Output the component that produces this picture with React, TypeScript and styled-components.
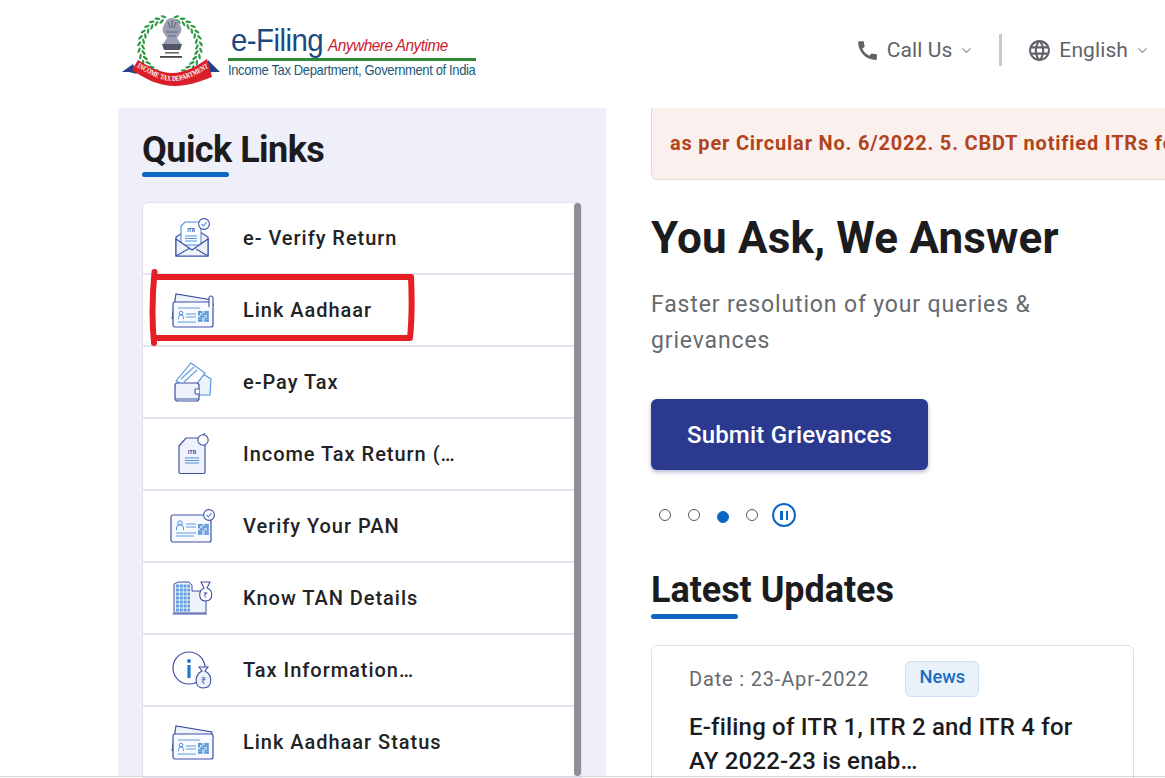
import React from 'react'
import styled, { createGlobalStyle } from 'styled-components'
import { MdCall, MdLanguage } from 'react-icons/md'
import { ChevronDown } from 'lucide-react'

const GlobalStyle = createGlobalStyle`
  html, body {
    margin: 0;
    padding: 0;
    height: 778px;
    overflow: hidden;
    background: #fff;
    font-family: Roboto, "Liberation Sans", sans-serif;
  }
`

const Page = styled.div`
  position: relative;
  width: 1165px;
  height: 778px;
  overflow: hidden;
  background: #fff;
`

const Header = styled.header`
  display: flex;
  align-items: center;
  justify-content: space-between;
  height: 108px;
  padding: 0 15px 8px 121px;
  box-sizing: border-box;
`

const Logo = styled.div`
  display: flex;
  align-items: center;
  gap: 7px;
`

const LogoText = styled.div`
  display: flex;
  flex-direction: column;
  width: 248px;
  margin-top: 6px;
`

const LogoTop = styled.div`
  display: flex;
  align-items: baseline;
  padding-left: 3px;
  height: 30px;
  line-height: 24px;
  white-space: nowrap;
`

const LogoName = styled.span`
  display: inline-block;
  width: 97px;
  transform: scaleX(0.92);
  transform-origin: left center;
  font-family: "Liberation Sans", Arial, sans-serif;
  font-size: 32px;
  letter-spacing: -0.6px;
  color: #1c4a80;
`

const LogoSlogan = styled.span`
  display: inline-block;
  transform: scaleX(0.93);
  transform-origin: left center;
  font-family: "Liberation Sans", Arial, sans-serif;
  font-size: 16.5px;
  font-style: italic;
  letter-spacing: -0.5px;
  color: #c8202f;
`

const LogoRule = styled.div`
  height: 3px;
  background: #2f8a3c;
`

const LogoSub = styled.div`
  margin-top: 1px;
  transform: scaleX(0.892);
  transform-origin: left center;
  font-family: "Liberation Sans", Arial, sans-serif;
  font-size: 14.6px;
  line-height: 17px;
  letter-spacing: -0.42px;
  color: #1c5a78;
  white-space: nowrap;
`

const Tools = styled.div`
  display: flex;
  align-items: center;
  color: #5f6368;
  font-size: 21px;
  letter-spacing: 0.1px;
`

const Tool = styled.div`
  display: flex;
  align-items: center;
  gap: 7px;
`

const ToolDivider = styled.div`
  width: 3px;
  height: 32px;
  margin: 0 25px;
  background: #c9c9c9;
`

const Main = styled.main`
  display: flex;
  align-items: flex-start;
  padding-left: 118px;
`

const LeftPanel = styled.aside`
  flex: 0 0 488px;
  height: 668px;
  padding: 24px 24px 0;
  box-sizing: border-box;
  background: #eeeff8;
`

const SectionTitle = styled.h2<{ $spacing: number }>`
  margin: 0;
  font-size: 36px;
  line-height: 36px;
  font-weight: 700;
  letter-spacing: ${p => p.$spacing}px;
  color: #1c1c1e;
`

const TitleBar = styled.div<{ $gap: number }>`
  width: 87px;
  height: 5px;
  margin-top: ${p => p.$gap}px;
  border-radius: 3px;
  background: #0b66c3;
`

const LinkList = styled.div`
  position: relative;
  width: 440px;
  height: 640px;
  margin-top: 25px;
  box-sizing: border-box;
  background: #fff;
  border: 1px solid #dfe0ea;
  border-radius: 6px 6px 0 0;
`

const LinkRow = styled.div`
  display: flex;
  align-items: center;
  height: 72px;
  box-sizing: border-box;
  border-bottom: 2px solid #e2e3ec;
`

const LinkIcon = styled.div`
  flex: 0 0 100px;
  display: flex;
  justify-content: center;
`

const LinkLabel = styled.span`
  font-size: 20px;
  font-weight: 500;
  letter-spacing: 0.97px;
  color: #232326;
  white-space: nowrap;
`

const ScrollThumb = styled.div`
  position: absolute;
  top: 0;
  right: 0;
  width: 7px;
  height: 573px;
  border-radius: 4px;
  background: #8d8d9b;
`

const RedMark = styled.svg`
  position: absolute;
  left: 148px;
  top: 268px;
`

const RightColumn = styled.section`
  flex: 0 0 483px;
  margin-left: 45px;
`

const Ticker = styled.div`
  width: 600px;
  height: 72px;
  box-sizing: border-box;
  padding: 0 0 2px 18px;
  display: flex;
  align-items: center;
  background: #faf1ef;
  border: 1px solid #e6dbd8;
  border-top: none;
  border-radius: 0 0 6px 6px;
  font-size: 20px;
  font-weight: 700;
  letter-spacing: 0.8px;
  color: #b2441c;
  white-space: nowrap;
`

const Hero = styled.h1`
  margin: 32px 0 0;
  font-size: 44px;
  line-height: 52px;
  font-weight: 700;
  letter-spacing: 0.18px;
  color: #1c1c1e;
`

const HeroCopy = styled.p`
  margin: 23px 0 0;
  width: 420px;
  font-size: 23px;
  line-height: 36px;
  letter-spacing: 0.85px;
  color: #666a6e;
`

const PrimaryButton = styled.button`
  display: block;
  width: 277px;
  height: 71px;
  margin-top: 40px;
  border: none;
  border-radius: 6px;
  background: #2b3a8f;
  box-shadow: 0 2px 4px rgba(30, 40, 110, 0.35);
  color: #fff;
  font-family: inherit;
  font-size: 24px;
  font-weight: 500;
  letter-spacing: 0.2px;
`

const Pager = styled.div`
  display: flex;
  align-items: center;
  gap: 17px;
  height: 26px;
  margin-top: 32px;
  padding-left: 8px;
`

const Dot = styled.span<{ $active?: boolean }>`
  width: 12px;
  height: 12px;
  margin-top: ${p => (p.$active ? '4px' : '0')};
  box-sizing: border-box;
  border-radius: 50%;
  border: 1px solid ${p => (p.$active ? '#0b66c3' : '#55585c')};
  background: ${p => (p.$active ? '#0b66c3' : '#fff')};
`

const PauseButton = styled.span`
  display: flex;
  align-items: center;
  justify-content: center;
  gap: 3px;
  width: 24px;
  height: 24px;
  margin-left: -3px;
  box-sizing: border-box;
  border: 2.5px solid #0b66c3;
  border-radius: 50%;

  &::before,
  &::after {
    content: '';
    width: 2.5px;
    height: 9px;
    background: #0b66c3;
  }
`

const UpdatesHead = styled.div`
  margin-top: 44px;
`

const NewsCard = styled.article`
  width: 483px;
  height: 200px;
  margin-top: 26px;
  padding: 15px 37px 0;
  box-sizing: border-box;
  border: 1px solid #dfe1e6;
  border-radius: 6px;
  background: #fff;
`

const NewsMeta = styled.div`
  display: flex;
  align-items: center;
  gap: 36px;
`

const NewsDate = styled.span`
  font-size: 20px;
  letter-spacing: 0.83px;
  color: #666a6e;
`

const NewsTag = styled.span`
  padding: 4px 13px 8px;
  border: 1px solid #cfdfef;
  border-radius: 6px;
  background: #e9f1fb;
  font-size: 18.3px;
  font-weight: 500;
  line-height: 22px;
  color: #1b6dbf;
`

const NewsTitle = styled.p`
  margin: 13px 0 0;
  font-size: 24px;
  line-height: 34px;
  font-weight: 500;
  letter-spacing: 0.18px;
  color: #1c1c1e;
`

const BottomEdge = styled.div`
  position: absolute;
  left: 0;
  right: 0;
  bottom: 1px;
  height: 1px;
  background: #d6d7dc;
`

// leaves of the wreath: two rows along each side, measured in degrees from the top
const leaves = Array.from({ length: 24 }, (_, i) => 12 + i * 6).flatMap(t => {
  const a = (t * Math.PI) / 180
  const row = Math.round(t / 6) % 2 === 0 ? 31 : 27
  const tilt = row === 31 ? 28 : -28
  const x = Math.sin(a) * row
  const y = -Math.cos(a) * row
  return [
    { x: 49 - x, y: 34 + y, r: 90 - t + tilt },
    { x: 49 + x, y: 34 + y, r: -(90 - t + tilt) }
  ]
})

const Emblem = () => (
  <svg width="100" height="74" viewBox="0 0 100 74">
    {leaves.map((l, i) => (
      <ellipse key={i} cx={l.x} cy={l.y} rx="1.2" ry="3" fill="#2f9a45" transform={`rotate(${l.r} ${l.x} ${l.y})`} />
    ))}
    {/* lion capital */}
    <path d="M45 8 C47 4 55 4 57 8 L60 14 C61 17 60 20 58 22 L56 25 L60 31 L42 31 L46 25 L44 22 C42 20 41 17 42 14 Z" fill="#9aa0b2" />
    <path d="M47 9 L49 15 M51 7 V15 M55 9 L53 15 M45 19 H57 M47 23 H55" stroke="#5a6075" strokeWidth="0.9" />
    <path d="M41 31 H61 L59 37 H43 Z" fill="#4f5468" />
    <rect x="44" y="39" width="14" height="1.6" fill="#6a6a6a" />
    <rect x="39" y="43" width="22" height="1.8" fill="#444" />
    {/* ribbon */}
    <path d="M1 59 L12 51 L16 61 L8 59 Z" fill="#27408b" />
    <path d="M99 59 L87 47 L84 60 L92 59 Z" fill="#27408b" />
    <path d="M17 47 C28 54 40 60 51 60 C64 60 76 53 86 46 L91 64 C78 69 66 73 54 73 C38 73 24 66 11 57 Z" fill="#d81f2a" />
    <path id="ribbonPath" d="M14 53 C28 61 40 68 52 68 C65 68 77 61 89 54" fill="none" />
    <text fontFamily="Liberation Serif, serif" fontSize="7.5" fontWeight="700" fill="#fff">
      <textPath href="#ribbonPath" startOffset="2" textLength="78" lengthAdjust="spacingAndGlyphs">INCOME TAX DEPARTMENT</textPath>
    </text>
  </svg>
)

const ink = '#3f51a3'
const sky = '#4a90dc'
const pale = '#eef2fb'

// dense blue block that reads as a qr code at this size
const qrCells = [1, 1, 0, 1, 1, 1, 0, 1, 1, 1, 0, 1, 1, 0, 1, 1, 1, 0, 1, 1, 1, 1, 0, 1, 1]

const QrBlock = ({ x, y, s = 10 }: { x: number; y: number; s?: number }) => (
  <g fill={sky}>
    <rect x={x} y={y} width={s} height={s} opacity="0.3" />
    {qrCells.map((on, i) =>
      on ? (
        <rect key={i} x={x + (i % 5) * (s / 5)} y={y + Math.floor(i / 5) * (s / 5)} width={s / 5 - 0.3} height={s / 5 - 0.3} />
      ) : null
    )}
  </g>
)

const CardFront = ({ y = 14 }: { y?: number }) => (
  <g>
    <rect x="3" y={y} width="40" height="25" rx="2" fill="#f7f9fe" stroke={ink} strokeWidth="1.2" />
    <circle cx="11" cy={y + 11} r="1.8" fill="none" stroke={sky} />
    <path d={`M8.5 ${y + 17} v-1.5 a2.5 2.5 0 0 1 5 0 v1.5`} fill="none" stroke={sky} />
    <path d={`M16 ${y + 12} h10 M16 ${y + 15} h10 M8 ${y + 6} h22 M8 ${y + 20} h18`} stroke={sky} strokeWidth="0.9" />
    <QrBlock x={28} y={y + 9} s={11} />
  </g>
)

const IconVerifyReturn = () => (
  <svg width="42" height="42" viewBox="0 0 42 42">
    <path d="M4 20 L20 10 L36 20 V39 H4 Z" fill={pale} stroke={ink} strokeWidth="1.2" />
    <path d="M9 28 V9 L13 5 H29 V28 Z" fill="#fff" stroke={sky} strokeWidth="1.1" />
    <text x="19" y="15" fontSize="5" fontFamily="Roboto" fontWeight="700" textAnchor="middle" fill={ink}>ITR</text>
    <path d="M13 19 H25 M13 21.5 H25 M13 24 H25" stroke={sky} strokeWidth="1" />
    <path d="M4 22 L20 33 L36 22 V39 H4 Z" fill={pale} stroke={ink} strokeWidth="1.2" />
    <path d="M4 39 L18 31 M36 39 L24 32" stroke={ink} strokeWidth="1.1" />
    <circle cx="32" cy="7" r="5.4" fill="#fff" stroke={ink} strokeWidth="1.1" />
    <path d="M29.5 7 L31.4 9 L34.6 5.2" fill="none" stroke={sky} strokeWidth="1.1" />
  </svg>
)

const IconAadhaar = ({ clip }: { clip?: boolean }) => (
  <svg width="46" height="38" viewBox="0 0 46 38">
    <path d="M2 28 L6 3 L42 9 L41 20" fill={pale} stroke={ink} strokeWidth="1.2" />
    <CardFront y={11} />
    {clip && <path d="M39 16 V7 a2 2 0 0 1 4 0 V15" fill="#fff" stroke={ink} strokeWidth="1.1" />}
  </svg>
)

const IconPay = () => (
  <svg width="38" height="40" viewBox="0 0 38 40">
    <path d="M6 22 L20 6 L37 17 L36 33 H22 Z" fill={pale} stroke={sky} strokeWidth="1.1" />
    <path d="M2 19 L17 1 L31 11 L18 28 Z" fill="#fff" stroke={sky} strokeWidth="1.1" />
    <path d="M7 17 L20 5 M10 20 L23 8" stroke={sky} strokeWidth="1.6" opacity="0.75" />
    <rect x="1" y="21" width="24" height="18" rx="2.5" fill={pale} stroke={ink} strokeWidth="1.2" />
    <path d="M25 27 h-3 a1 1 0 0 0 -1 1 v3 a1 1 0 0 0 1 1 h3" fill="#fff" stroke={ink} strokeWidth="1.1" />
    <path d="M2 37 H24" stroke={ink} strokeWidth="1" />
  </svg>
)

const IconReturn = () => (
  <svg width="32" height="42" viewBox="0 0 32 42">
    <path d="M2 13 L9 5 H28 V39 a1.5 1.5 0 0 1 -1.5 1.5 H3.5 A1.5 1.5 0 0 1 2 39 Z" fill={pale} stroke={ink} strokeWidth="1.2" />
    <text x="15" y="21" fontSize="5.5" fontFamily="Roboto" fontWeight="700" textAnchor="middle" fill={ink}>ITR</text>
    <path d="M8 25 H22 M8 27.5 H22 M8 30 H22" stroke={sky} strokeWidth="1" />
    <circle cx="26" cy="7" r="5.2" fill="#fff" stroke={ink} strokeWidth="1.1" />
    <path d="M26 2 L28 0.5" stroke={ink} strokeWidth="1.4" />
  </svg>
)

const IconPan = () => (
  <svg width="46" height="34" viewBox="0 0 46 34">
    <rect x="1" y="6" width="40" height="27" rx="2" fill="#f7f9fe" stroke={ink} strokeWidth="1.2" />
    <circle cx="10" cy="14" r="2.2" fill="none" stroke={sky} />
    <path d="M6.5 21 v-2 a3 3 0 0 1 7 0 v2" fill="none" stroke={sky} />
    <path d="M16 15 H26 M16 18 H26 M6 24 H26 M6 27 H24" stroke={sky} strokeWidth="0.9" />
    <QrBlock x={28} y={15} s={11} />
    <circle cx="39" cy="6" r="5.4" fill="#fff" stroke={ink} strokeWidth="1.1" />
    <path d="M36.4 6 L38.4 8 L41.6 4.2" fill="none" stroke={sky} strokeWidth="1.1" />
  </svg>
)

const IconTan = () => (
  <svg width="42" height="34" viewBox="0 0 42 34">
    <path d="M2 32 V3 L6 1 H17 L20 4 V10 H34 V32 Z" fill={pale} stroke={ink} strokeWidth="1" />
    <path d="M4 5 H18 M4 9 H18 M4 13 H18 M4 17 H18 M4 21 H18 M4 25 H18 M4 29 H18" stroke={sky} strokeWidth="2.8" strokeDasharray="3 0.8" opacity="0.85" />
    <path d="M0.5 33 H35" stroke={ink} strokeWidth="1" />
    <path d="M32 7 L29 1 H38 L35 7 C41 9 42 19 34 20 C26 20 26 10 32 7 Z" fill="#fff" stroke={ink} strokeWidth="1.1" />
    <text x="33.5" y="17" fontSize="8" fontFamily="Noto Sans, sans-serif" textAnchor="middle" fill={ink}>₹</text>
  </svg>
)

const IconInfo = () => (
  <svg width="42" height="38" viewBox="0 0 42 38">
    <circle cx="17" cy="17" r="16" fill="#fff" stroke={ink} strokeWidth="1.2" />
    <circle cx="17" cy="10" r="2" fill="#1f78d1" />
    <rect x="15.4" y="14" width="3.2" height="13" fill="#1f78d1" />
    <path d="M30 20 L27 16 H36 L33 20 C41 24 41 37 31 37 C22 37 22 24 30 20 Z" fill={pale} stroke={ink} strokeWidth="1.1" />
    <text x="31.5" y="33" fontSize="10" fontFamily="Noto Sans, sans-serif" textAnchor="middle" fill={ink}>₹</text>
  </svg>
)

const links = [
  { label: 'e- Verify Return', icon: <IconVerifyReturn /> },
  { label: 'Link Aadhaar', icon: <IconAadhaar clip /> },
  { label: 'e-Pay Tax', icon: <IconPay /> },
  { label: 'Income Tax Return (…', icon: <IconReturn /> },
  { label: 'Verify Your PAN', icon: <IconPan /> },
  { label: 'Know TAN Details', icon: <IconTan /> },
  { label: 'Tax Information…', icon: <IconInfo /> },
  { label: 'Link Aadhaar Status', icon: <IconAadhaar /> }
]

const App = () => (
  <Page>
    <GlobalStyle />
    <Header>
      <Logo>
        <Emblem />
        <LogoText>
          <LogoTop>
            <LogoName>e-Filing</LogoName>
            <LogoSlogan>Anywhere Anytime</LogoSlogan>
          </LogoTop>
          <LogoRule />
          <LogoSub>Income Tax Department, Government of India</LogoSub>
        </LogoText>
      </Logo>
      <Tools>
        <Tool>
          <MdCall size={25} />
          Call Us
          <ChevronDown size={15} color="#9a9a9a" />
        </Tool>
        <ToolDivider />
        <Tool>
          <MdLanguage size={25} />
          English
          <ChevronDown size={15} color="#9a9a9a" />
        </Tool>
      </Tools>
    </Header>
    <Main>
      <LeftPanel>
        <SectionTitle $spacing={-0.55}>Quick Links</SectionTitle>
        <TitleBar $gap={4} />
        <LinkList>
          {links.map(link => (
            <LinkRow key={link.label}>
              <LinkIcon>{link.icon}</LinkIcon>
              <LinkLabel>{link.label}</LinkLabel>
            </LinkRow>
          ))}
          <ScrollThumb />
        </LinkList>
      </LeftPanel>
      <RightColumn>
        <Ticker>as per Circular No. 6/2022. 5. CBDT notified ITRs for</Ticker>
        <Hero>You Ask, We Answer</Hero>
        <HeroCopy>Faster resolution of your queries &amp; grievances</HeroCopy>
        <PrimaryButton>Submit Grievances</PrimaryButton>
        <Pager>
          <Dot />
          <Dot />
          <Dot $active />
          <Dot />
          <PauseButton />
        </Pager>
        <UpdatesHead>
          <SectionTitle $spacing={-0.05}>Latest Updates</SectionTitle>
          <TitleBar $gap={6} />
        </UpdatesHead>
        <NewsCard>
          <NewsMeta>
            <NewsDate>Date : 23-Apr-2022</NewsDate>
            <NewsTag>News</NewsTag>
          </NewsMeta>
          <NewsTitle>E-filing of ITR 1, ITR 2 and ITR 4 for AY 2022-23 is enab…</NewsTitle>
        </NewsCard>
      </RightColumn>
    </Main>
    <RedMark width="272" height="80" viewBox="0 0 272 80">
      <path d="M6.5 4 C4 30 4 55 6 75 M6 70 H262 C264 50 264 30 263 9 H7" fill="none" stroke="#e61e25" strokeWidth="6" strokeLinecap="round" strokeLinejoin="round" />
    </RedMark>
    <BottomEdge />
  </Page>
)

export default App
